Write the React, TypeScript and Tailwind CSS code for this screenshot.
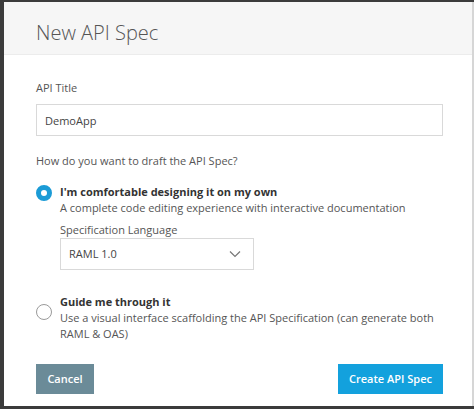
import { useState } from "react";

function Radio({ checked }: { checked: boolean }) {
  return checked ? (
    <span className="block h-4 w-4 rounded-full border-[5px] border-[#1b9bd6] bg-white" />
  ) : (
    <span className="block h-4 w-4 rounded-full border border-[#9a9a9a] bg-white" />
  );
}

export default function App() {
  const [mode, setMode] = useState("own");
  return (
    <div
      className="flex h-[409px] w-[474px] bg-[#3b3b3b] pl-[4px] pt-[2px] pb-[3px]"
      style={{ fontFamily: '"Open Sans", "Liberation Sans", sans-serif' }}
    >
      <div className="flex flex-1 flex-col border-r-2 border-[#d6d6d6] bg-white">
        <div className="h-[53px] border-b border-[#ececec] bg-[#f6f6f6] pl-[32px] pt-[17px]">
          <h1 className="text-[20px] font-light leading-[28px] text-[#555]">New API Spec</h1>
        </div>

        <div className="flex flex-1 flex-col pl-[32px] pr-[29px]">
          <label className="mt-[24px] text-[11px] leading-[18px] text-[#555]">API Title</label>
          <input
            className="mt-[7px] h-[32px] w-full border border-[#d9d9d9] px-[8px] text-[11px] text-[#444] outline-none"
            defaultValue="DemoApp"
          />

          <p className="mt-[16px] text-[11px] leading-[18px] text-[#555]">
            How do you want to draft the API Spec?
          </p>

          <div className="mt-[14px] flex cursor-pointer gap-[8px]" onClick={() => setMode("own")}>
            <div className="mt-[1px]">
              <Radio checked={mode === "own"} />
            </div>
            <div className="flex flex-col">
              <span className="text-[11px] font-bold leading-[16px] text-[#333]">
                I'm comfortable designing it on my own
              </span>
              <span className="text-[11px] leading-[16px] text-[#555]">
                A complete code editing experience with interactive documentation
              </span>
              <span className="mt-[6px] text-[11px] leading-[16px] text-[#555]">
                Specification Language
              </span>
              <div className="flex h-[32px] w-[194px] items-center justify-between border border-[#d9d9d9] pl-[8px] pr-[12px]">
                <span className="text-[11px] text-[#444]">RAML 1.0</span>
                <svg width="12" height="8" viewBox="0 0 12 8" fill="none">
                  <path d="M1 1.5l5 5 5-5" stroke="#777" strokeWidth="1.2" />
                </svg>
              </div>
            </div>
          </div>

          <div className="mt-[24px] flex cursor-pointer gap-[8px]" onClick={() => setMode("guide")}>
            <div className="mt-[10px]">
              <Radio checked={mode === "guide"} />
            </div>
            <div className="flex flex-col">
              <span className="text-[11px] font-bold leading-[16px] text-[#333]">
                Guide me through it
              </span>
              <span className="text-[11px] leading-[16px] text-[#555]">
                Use a visual interface scaffolding the API Specification (can generate both RAML &amp; OAS)
              </span>
            </div>
          </div>

          <div className="mt-[22px] flex justify-between">
            <button className="h-[30px] w-[58px] bg-[#6b8b98] text-[11px] font-semibold text-white">
              Cancel
            </button>
            <button className="h-[30px] w-[105px] bg-[#13a1dd] text-[11px] font-semibold text-white">
              Create API Spec
            </button>
          </div>
        </div>
      </div>
    </div>
  );
}
